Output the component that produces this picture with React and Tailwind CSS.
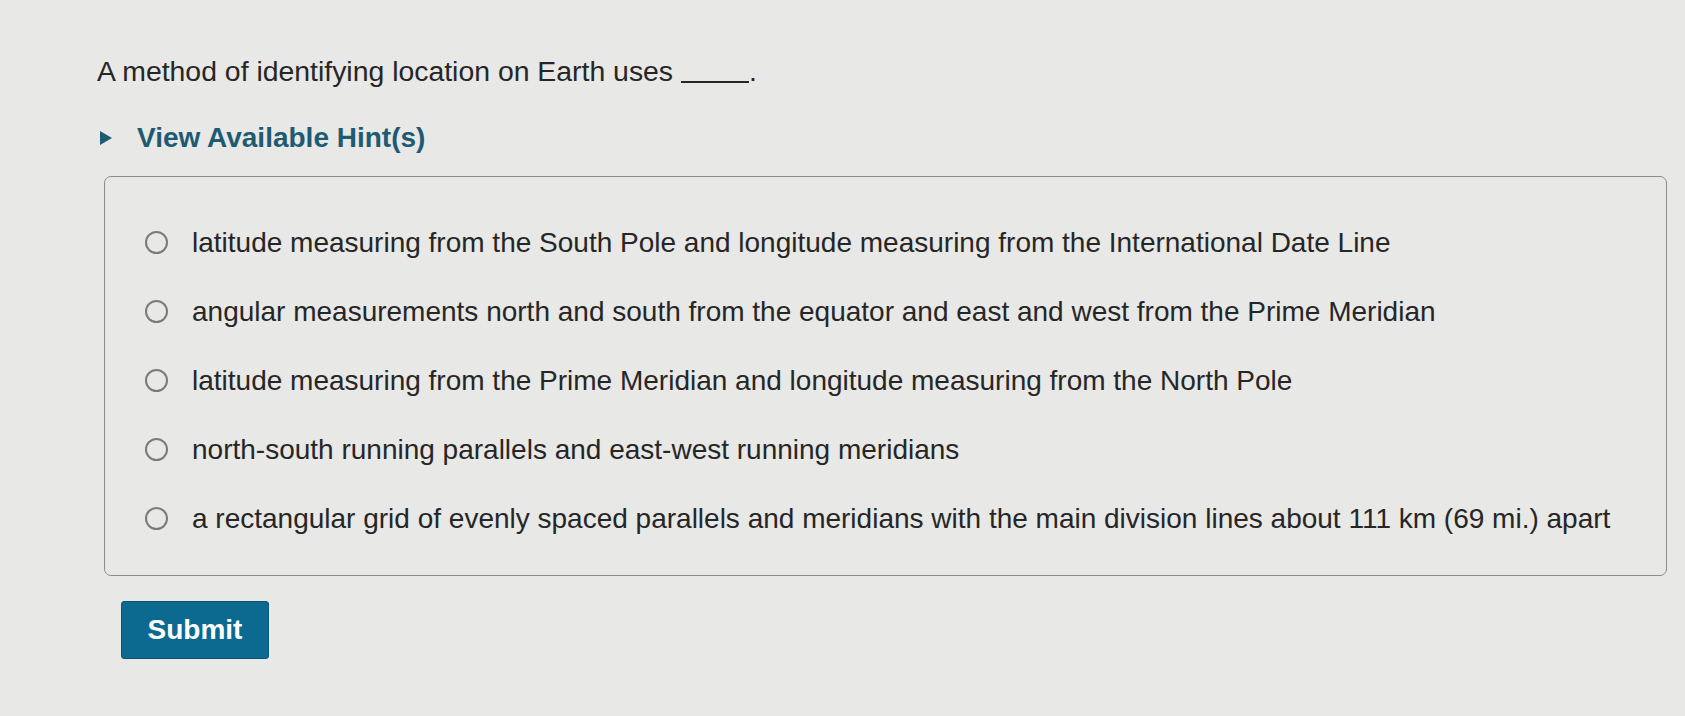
import React, { useState } from 'react';

const options = [
  'latitude measuring from the South Pole and longitude measuring from the International Date Line',
  'angular measurements north and south from the equator and east and west from the Prime Meridian',
  'latitude measuring from the Prime Meridian and longitude measuring from the North Pole',
  'north-south running parallels and east-west running meridians',
  'a rectangular grid of evenly spaced parallels and meridians with the main division lines about 111 km (69 mi.) apart',
];

export default function App() {
  const [selected, setSelected] = useState(null);
  const [open, setOpen] = useState(false);

  return (
    <div
      className="min-h-screen w-full bg-[#e8e8e6] pl-[97px] pt-[54px] text-[#262626]"
      style={{ fontFamily: '"Liberation Sans", Arial, sans-serif' }}
    >
      {/* question */}
      <p className="text-[28.4px] leading-[34px]">
        A method of identifying location on Earth uses{' '}
        <span className="inline-block w-[68px] border-b-2 border-[#262626] align-baseline leading-[20px]">&nbsp;</span>.
      </p>

      {/* hints toggle */}
      <button
        onClick={() => setOpen(!open)}
        className="mt-[33px] ml-[3px] flex items-center gap-[25px] text-[28px] leading-[34px] font-bold text-[#1f5a73] cursor-pointer"
      >
        <svg width="12" height="14" viewBox="0 0 12 14" className={open ? 'rotate-90' : ''}>
          <path d="M0 0 L12 7 L0 14 Z" fill="#1f5a73" />
        </svg>
        View Available Hint(s)
      </button>

      {/* answer choices */}
      <div className="ml-[7px] mt-[21px] w-[1563px] rounded-[7px] border-[1.5px] border-[#8c8c8c] pt-[31px] pb-[22px] pl-[40px]">
        {options.map((opt, idx) => (
          <label
            key={idx}
            onClick={() => setSelected(idx)}
            className="flex h-[69px] cursor-pointer items-center gap-[24px] text-[28px] leading-[34px]"
          >
            <span
              className={`flex h-[23px] w-[23px] shrink-0 items-center justify-center rounded-full border-2 ${
                selected === idx ? 'border-[#0c6a91]' : 'border-[#7a7a7a]'
              }`}
            >
              {selected === idx && <span className="h-[11px] w-[11px] rounded-full bg-[#0c6a91]" />}
            </span>
            {opt}
          </label>
        ))}
      </div>

      <button className="ml-[24px] mt-[25px] flex h-[58px] w-[148px] items-center justify-center rounded-[3px] border border-[#0a5676] bg-[#0c6a91] text-[28px] font-bold text-white">
        Submit
      </button>
    </div>
  );
}
